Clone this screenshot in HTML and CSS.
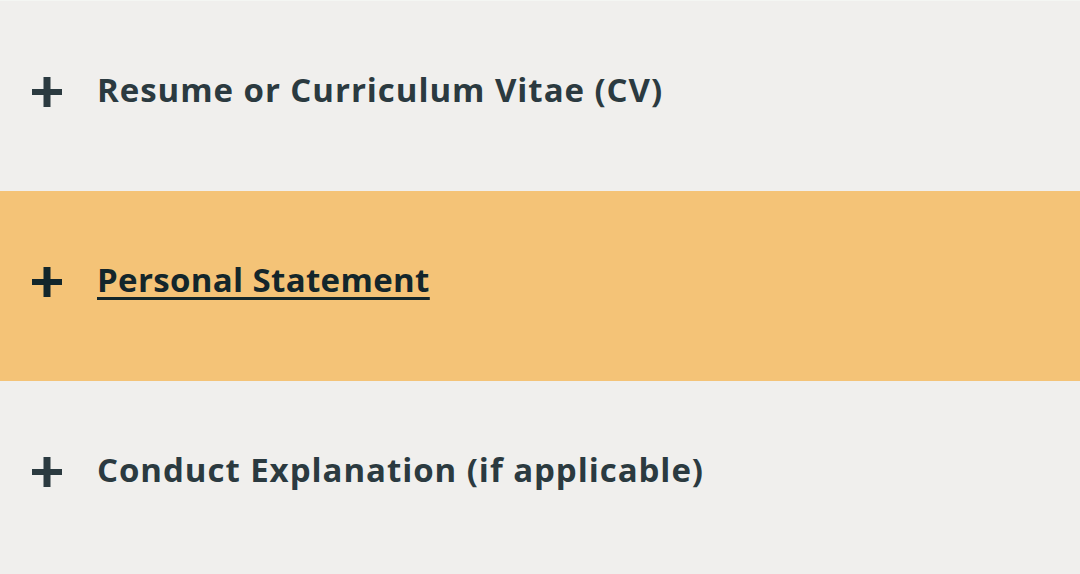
FILE: index.html
```html
<!DOCTYPE html>
<html lang="en">
<head>
<meta charset="utf-8">
<title>Application materials</title>
<link rel="stylesheet" href="styles.css">
</head>
<body>
<div class="topline"></div>
<ul class="accordion">
  <li class="item">
    <button class="head">
      <svg class="plus" width="30" height="30" viewBox="0 0 30 30"><rect x="0" y="12" width="30" height="6"/><rect x="11.5" y="0" width="7" height="30"/></svg>
      <span class="label">Resume or Curriculum Vitae (CV)</span>
    </button>
  </li>
  <li class="item active">
    <button class="head">
      <svg class="plus" width="30" height="30" viewBox="0 0 30 30"><rect x="0" y="12" width="30" height="6"/><rect x="11.5" y="0" width="7" height="30"/></svg>
      <span class="label">Personal Statement</span>
    </button>
  </li>
  <li class="item">
    <button class="head">
      <svg class="plus" width="30" height="30" viewBox="0 0 30 30"><rect x="0" y="12" width="30" height="6"/><rect x="11.5" y="0" width="7" height="30"/></svg>
      <span class="label">Conduct Explanation (if applicable)</span>
    </button>
  </li>
</ul>
</body>
</html>
```

FILE: styles.css
```css
html, body {
  margin: 0;
  padding: 0;
  background: #f0efed;
}
.topline {
  height: 1px;
  background: #f4f6f3;
}
.accordion {
  list-style: none;
  margin: 0;
  padding: 0;
}
.item {
  height: 190px;
  background: #f0efed;
}
.item.active {
  background: #f4c377;
}
.head {
  display: flex;
  align-items: center;
  gap: 35px;
  width: 100%;
  height: 176px;
  padding: 0 0 0 32px;
  border: 0;
  background: transparent;
  font-family: "Open Sans", sans-serif;
  font-weight: 700;
  font-size: 33px;
  letter-spacing: 0.95px;
  color: #2b3a40;
  text-align: left;
  cursor: pointer;
}
.plus {
  flex: none;
  fill: #2b3a40;
  margin-top: 6px;
}
.active .head {
  color: #13262b;
}
.active .plus {
  fill: #13262b;
}
.active .label {
  letter-spacing: 0.35px;
  text-decoration: underline;
  text-decoration-thickness: 3px;
  text-underline-offset: 5px;
}
```
